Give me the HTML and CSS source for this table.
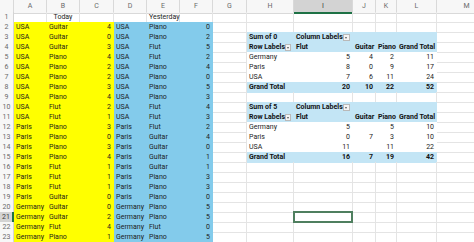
FILE: index.html
```html
<!DOCTYPE html>
<html>
<head>
<meta charset="utf-8">
<link rel="stylesheet" href="styles.css">
</head>
<body>
<div class="sheet">
<div class="row hdr"><div class="corner"></div><div>A</div><div>B</div><div>C</div><div>D</div><div>E</div><div>F</div><div>G</div><div>H</div><div class="csel">I</div><div>J</div><div>K</div><div>L</div><div>M</div></div>
<div class="row"><div class="rh">1</div><div></div><div class="ct">Today</div><div></div><div></div><div class="ct">Yesterday</div><div></div><div></div><div></div><div></div><div></div><div></div><div></div><div></div></div>
<div class="row"><div class="rh">2</div><div class="y">USA</div><div class="y">Guitar</div><div class="y n">4</div><div class="b">USA</div><div class="b">Piano</div><div class="b n">0</div><div></div><div></div><div></div><div></div><div></div><div></div><div></div></div>
<div class="row"><div class="rh">3</div><div class="y">USA</div><div class="y">Guitar</div><div class="y n">0</div><div class="b">USA</div><div class="b">Piano</div><div class="b n">2</div><div></div><div class="ph">Sum of 0</div><div class="ph dd"><span>Column Labels</span><i class="btn"></i></div><div class="ph"></div><div class="ph"></div><div class="ph"></div><div></div></div>
<div class="row"><div class="rh">4</div><div class="y">USA</div><div class="y">Guitar</div><div class="y n">3</div><div class="b">USA</div><div class="b">Flut</div><div class="b n">5</div><div></div><div class="ph dd"><span>Row Labels</span><i class="btn"></i></div><div class="ph">Flut</div><div class="ph n">Guitar</div><div class="ph n">Piano</div><div class="ph n">Grand Total</div><div></div></div>
<div class="row"><div class="rh">5</div><div class="y">USA</div><div class="y">Piano</div><div class="y n">4</div><div class="b">USA</div><div class="b">Flut</div><div class="b n">2</div><div></div><div class="pw">Germany</div><div class="pw n">5</div><div class="pw n">4</div><div class="pw n">2</div><div class="pw n">11</div><div></div></div>
<div class="row"><div class="rh">6</div><div class="y">USA</div><div class="y">Piano</div><div class="y n">2</div><div class="b">USA</div><div class="b">Piano</div><div class="b n">4</div><div></div><div class="pw">Paris</div><div class="pw n">8</div><div class="pw n">0</div><div class="pw n">9</div><div class="pw n">17</div><div></div></div>
<div class="row"><div class="rh">7</div><div class="y">USA</div><div class="y">Piano</div><div class="y n">2</div><div class="b">USA</div><div class="b">Piano</div><div class="b n">0</div><div></div><div class="pw pl">USA</div><div class="pw pl n">7</div><div class="pw pl n">6</div><div class="pw pl n">11</div><div class="pw pl n">24</div><div></div></div>
<div class="row"><div class="rh">8</div><div class="y">USA</div><div class="y">Piano</div><div class="y n">3</div><div class="b">USA</div><div class="b">Piano</div><div class="b n">5</div><div></div><div class="ph">Grand Total</div><div class="ph n">20</div><div class="ph n">10</div><div class="ph n">22</div><div class="ph n">52</div><div></div></div>
<div class="row"><div class="rh">9</div><div class="y">USA</div><div class="y">Piano</div><div class="y n">4</div><div class="b">USA</div><div class="b">Piano</div><div class="b n">3</div><div></div><div></div><div></div><div></div><div></div><div></div><div></div></div>
<div class="row"><div class="rh">10</div><div class="y">USA</div><div class="y">Flut</div><div class="y n">2</div><div class="b">USA</div><div class="b">Flut</div><div class="b n">4</div><div></div><div class="ph">Sum of 5</div><div class="ph dd"><span>Column Labels</span><i class="btn"></i></div><div class="ph"></div><div class="ph"></div><div class="ph"></div><div></div></div>
<div class="row"><div class="rh">11</div><div class="y">USA</div><div class="y">Flut</div><div class="y n">1</div><div class="b">USA</div><div class="b">Flut</div><div class="b n">3</div><div></div><div class="ph dd"><span>Row Labels</span><i class="btn"></i></div><div class="ph">Flut</div><div class="ph n">Guitar</div><div class="ph n">Piano</div><div class="ph n">Grand Total</div><div></div></div>
<div class="row"><div class="rh">12</div><div class="y">Paris</div><div class="y">Piano</div><div class="y n">3</div><div class="b">Paris</div><div class="b">Flut</div><div class="b n">2</div><div></div><div class="pw">Germany</div><div class="pw n">5</div><div class="pw n"></div><div class="pw n">5</div><div class="pw n">10</div><div></div></div>
<div class="row"><div class="rh">13</div><div class="y">Paris</div><div class="y">Piano</div><div class="y n">0</div><div class="b">Paris</div><div class="b">Guitar</div><div class="b n">4</div><div></div><div class="pw">Paris</div><div class="pw n">0</div><div class="pw n">7</div><div class="pw n">3</div><div class="pw n">10</div><div></div></div>
<div class="row"><div class="rh">14</div><div class="y">Paris</div><div class="y">Piano</div><div class="y n">3</div><div class="b">Paris</div><div class="b">Guitar</div><div class="b n">0</div><div></div><div class="pw pl">USA</div><div class="pw pl n">11</div><div class="pw pl n"></div><div class="pw pl n">11</div><div class="pw pl n">22</div><div></div></div>
<div class="row"><div class="rh">15</div><div class="y">Paris</div><div class="y">Piano</div><div class="y n">4</div><div class="b">Paris</div><div class="b">Guitar</div><div class="b n">1</div><div></div><div class="ph">Grand Total</div><div class="ph n">16</div><div class="ph n">7</div><div class="ph n">19</div><div class="ph n">42</div><div></div></div>
<div class="row"><div class="rh">16</div><div class="y">Paris</div><div class="y">Flut</div><div class="y n">1</div><div class="b">Paris</div><div class="b">Guitar</div><div class="b n">1</div><div></div><div></div><div></div><div></div><div></div><div></div><div></div></div>
<div class="row"><div class="rh">17</div><div class="y">Paris</div><div class="y">Flut</div><div class="y n">1</div><div class="b">Paris</div><div class="b">Piano</div><div class="b n">3</div><div></div><div></div><div></div><div></div><div></div><div></div><div></div></div>
<div class="row"><div class="rh">18</div><div class="y">Paris</div><div class="y">Flut</div><div class="y n">1</div><div class="b">Paris</div><div class="b">Piano</div><div class="b n">3</div><div></div><div></div><div></div><div></div><div></div><div></div><div></div></div>
<div class="row"><div class="rh">19</div><div class="y">Paris</div><div class="y">Guitar</div><div class="y n">0</div><div class="b">Paris</div><div class="b">Piano</div><div class="b n">0</div><div></div><div></div><div></div><div></div><div></div><div></div><div></div></div>
<div class="row"><div class="rh">20</div><div class="y">Germany</div><div class="y">Guitar</div><div class="y n">0</div><div class="b">Germany</div><div class="b">Piano</div><div class="b n">5</div><div></div><div></div><div></div><div></div><div></div><div></div><div></div></div>
<div class="row"><div class="rh rsel">21</div><div class="y">Germany</div><div class="y">Guitar</div><div class="y n">2</div><div class="b">Germany</div><div class="b">Piano</div><div class="b n">5</div><div></div><div></div><div class="active"></div><div></div><div></div><div></div><div></div></div>
<div class="row"><div class="rh">22</div><div class="y">Germany</div><div class="y">Flut</div><div class="y n">4</div><div class="b">Germany</div><div class="b">Flut</div><div class="b n">0</div><div></div><div></div><div></div><div></div><div></div><div></div><div></div></div>
<div class="row"><div class="rh">23</div><div class="y">Germany</div><div class="y">Piano</div><div class="y n">1</div><div class="b">Germany</div><div class="b">Piano</div><div class="b n">5</div><div></div><div></div><div></div><div></div><div></div><div></div><div></div></div>
</div>
</body>
</html>
```
FILE: styles.css
```css
html, body {
  margin: 0;
  padding: 0;
  background: #ffffff;
}
body {
  font-family: Roboto, "Liberation Sans", sans-serif;
  font-size: 7px;
  color: #1c1c1c;
}
.sheet {
  width: 474px;
  height: 242px;
  overflow: hidden;
}
.row {
  display: grid;
  grid-template-columns: 14px 33px 33px 34px 33px 33px 33px 34px 47px 59px 23px 21px 40px 60px;
  height: 10px;
}
.row > div {
  box-sizing: border-box;
  border-right: 1px solid #e4e4e4;
  border-bottom: 1px solid #e4e4e4;
  line-height: 10px;
  padding: 0 2px;
  white-space: nowrap;
  overflow: visible;
  min-width: 0;
}
.hdr {
  height: 12px;
}
.row.hdr > div {
  background: #f7f7f7;
  color: #6a6a6a;
  text-align: center;
  line-height: 12px;
  border-color: #d9d9d9;
}
.row.hdr > .csel {
  background: #d3d3d3;
  color: #3d3d3d;
  border-bottom: 2px solid #1e7145;
}
.row > .rh {
  background: #f7f7f7;
  color: #6a6a6a;
  text-align: center;
  padding: 0;
  border-right-color: #d4d4d4;
  border-bottom-color: #e4e4e4;
}
.row > .rsel {
  background: #d3d3d3;
  color: #3d3d3d;
  border-right: 2px solid #1e7145;
}
.row > .y {
  background: #ffff00;
  border-color: #ffff00;
}
.row > .b {
  background: #83cbeb;
  border-color: #83cbeb;
}
.row > .n {
  text-align: right;
}
.row > .ct {
  text-align: center;
}
.row > .ph {
  background: #c3e5f5;
  border-color: #c3e5f5;
  font-weight: 700;
  color: #111111;
}
.row > .pw {
  background: #ffffff;
  border-color: #ffffff;
}
.row > .pl {
  border-bottom-color: #8fcdea;
}
.row > .dd {
  display: flex;
  justify-content: space-between;
  align-items: center;
  padding-right: 2px;
}
.btn {
  display: block;
  box-sizing: border-box;
  width: 7px;
  height: 7px;
  border: 1px solid #b9b9b9;
  background: #f4f4f4;
  position: relative;
}
.btn::after {
  content: "";
  position: absolute;
  left: 1px;
  top: 2px;
  border-left: 1.5px solid transparent;
  border-right: 1.5px solid transparent;
  border-top: 2px solid #555555;
}
.row > .active {
  position: relative;
}
.active::after {
  content: "";
  position: absolute;
  left: -1px;
  top: -1px;
  right: -1px;
  bottom: -1px;
  border: 2px solid #4f7f5f;
}
```
